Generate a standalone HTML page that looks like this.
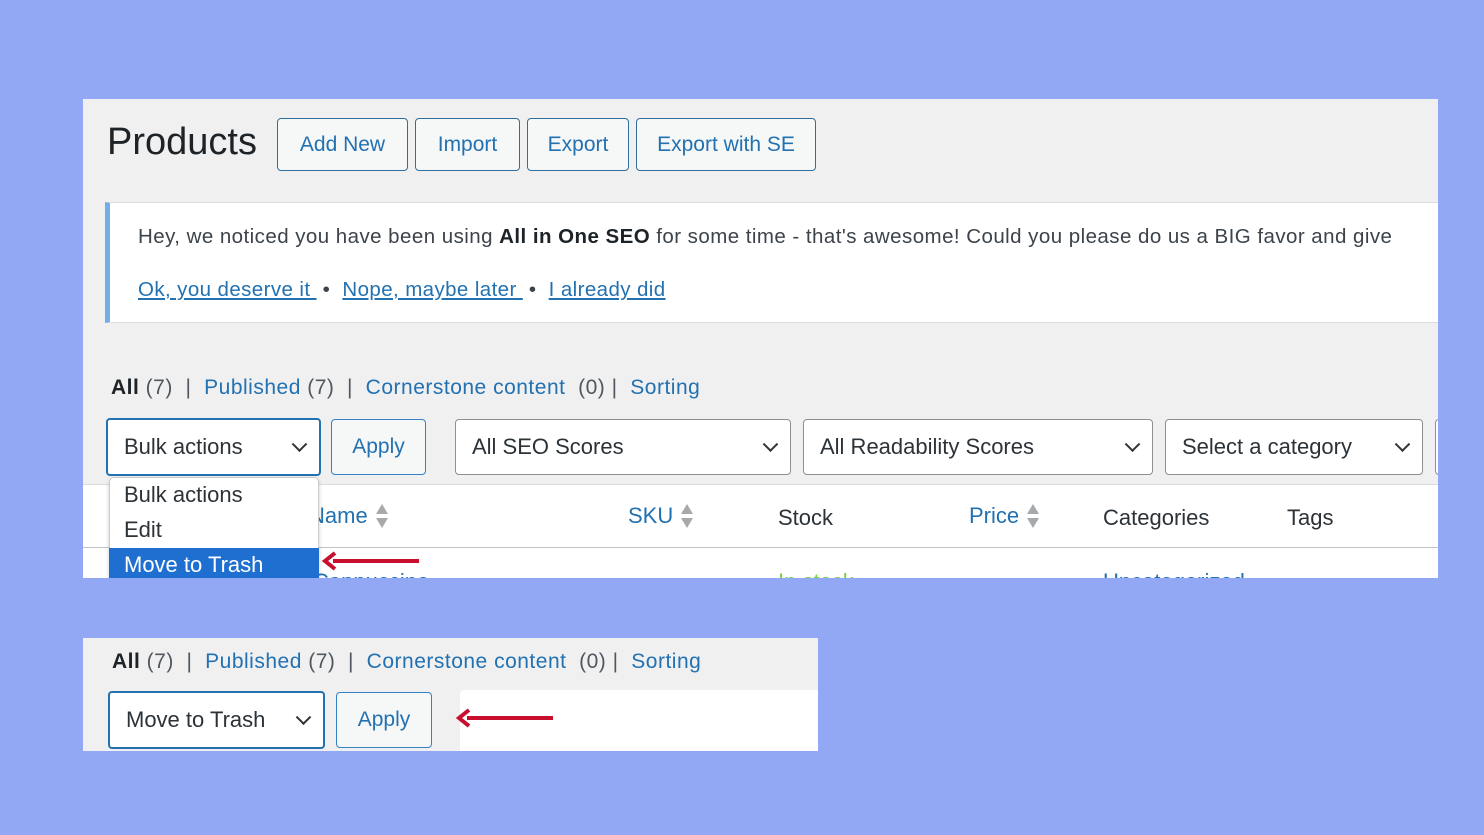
<!DOCTYPE html>
<html><head><meta charset="utf-8"><style>
*{margin:0;padding:0;box-sizing:border-box}
body{width:1484px;height:835px;background:#93a8f5;position:relative;overflow:hidden;font-family:"Liberation Sans",sans-serif;}
.p{position:absolute;background:#f0f0f1;overflow:hidden}
.a{position:absolute;white-space:nowrap}
.btn{position:absolute;border:1.5px solid #2f6f9f;border-radius:4px;color:#2271b1;font-size:21px;display:flex;align-items:center;justify-content:center;background:#f6f7f7}
.sel{position:absolute;border:1px solid #8c8f94;border-radius:4px;background:#fff;color:#2c3338;font-size:22px;display:flex;align-items:center;padding-left:16px}
.chev{position:absolute;right:14px;top:50%;width:11px;height:11px;border-right:2.5px solid #333;border-bottom:2.5px solid #333;transform:translateY(-75%) rotate(45deg)}
.lnk{color:#2271b1}
.sort{display:inline-block;vertical-align:middle;margin-left:8px;width:12px;height:26px;position:relative}
.sort:before{content:"";position:absolute;left:0;top:0;border-left:6px solid transparent;border-right:6px solid transparent;border-bottom:10px solid #a7aaad}
.sort:after{content:"";position:absolute;left:0;top:14px;border-left:6px solid transparent;border-right:6px solid transparent;border-top:10px solid #a7aaad}
</style></head><body>

<div class="p" style="left:83px;top:99px;width:1355px;height:479px">
  <div class="a" style="left:24px;top:22px;font-size:38px;color:#1d2327">Products</div>
  <div class="btn" style="left:194px;top:19px;width:131px;height:53px">Add New</div>
  <div class="btn" style="left:332px;top:19px;width:105px;height:53px">Import</div>
  <div class="btn" style="left:444px;top:19px;width:102px;height:53px">Export</div>
  <div class="btn" style="left:553px;top:19px;width:180px;height:53px">Export with SE</div>

  <div class="a" style="left:22px;top:103px;width:1340px;height:121px;background:#fff;border:1px solid #dcdcde;border-left:5px solid #72aee6"></div>
  <div class="a" style="left:55px;top:126px;font-size:20.5px;letter-spacing:0.45px;color:#3c434a">Hey, we noticed you have been using <b style="color:#1d2327">All in One SEO</b> for some time - that's awesome! Could you please do us a BIG favor and give</div>
  <div class="a" style="left:55px;top:179px;font-size:20.5px;letter-spacing:0.4px;color:#3c434a"><u class="lnk">Ok, you deserve it </u> &nbsp;•&nbsp; <u class="lnk">Nope, maybe later </u> &nbsp;•&nbsp; <u class="lnk">I already did</u></div>

  <div class="a" style="left:28px;top:277px;font-size:21px;letter-spacing:0.5px;color:#50575e"><b style="color:#1d2327">All</b> (7) &nbsp;| &nbsp;<span class="lnk">Published</span> (7) &nbsp;| &nbsp;<span class="lnk">Cornerstone content</span> &nbsp;(0) | &nbsp;<span class="lnk">Sorting</span></div>

  <div class="a" style="left:0;top:385px;width:1355px;height:100px;background:#fff;border-top:1px solid #dcdcde"></div>
  <div class="a" style="left:0;top:448px;width:1355px;height:1px;background:#c3c4c7"></div>

  <div class="sel" style="left:23px;top:319px;width:215px;height:58px;border:2px solid #2271b1">Bulk actions<span class="chev"></span></div>
  <div class="btn" style="left:248px;top:320px;width:95px;height:56px;border-color:#3582c4">Apply</div>
  <div class="sel" style="left:372px;top:320px;width:336px;height:56px">All SEO Scores<span class="chev"></span></div>
  <div class="sel" style="left:720px;top:320px;width:350px;height:56px">All Readability Scores<span class="chev"></span></div>
  <div class="sel" style="left:1082px;top:320px;width:258px;height:56px">Select a category<span class="chev"></span></div>
  <div class="a" style="left:1352px;top:320px;width:5px;height:56px;border:1px solid #8c8f94;border-right:none;border-radius:4px 0 0 4px;background:#fff"></div>

  <div class="a lnk" style="left:226px;top:404px;font-size:22px">Name<span class="sort"></span></div>
  <div class="a lnk" style="left:545px;top:404px;font-size:22px">SKU<span class="sort"></span></div>
  <div class="a" style="left:695px;top:406px;font-size:22px;color:#2c3338">Stock</div>
  <div class="a lnk" style="left:886px;top:404px;font-size:22px">Price<span class="sort"></span></div>
  <div class="a" style="left:1020px;top:406px;font-size:22px;color:#2c3338">Categories</div>
  <div class="a" style="left:1204px;top:406px;font-size:22px;color:#2c3338">Tags</div>
  <div class="a" style="left:230px;top:470px;font-size:22px;color:#2271b1">Cappuccino</div>
  <div class="a" style="left:695px;top:470px;font-size:22px;color:#7ad03a">In stock</div>
  <div class="a" style="left:1020px;top:470px;font-size:22px;color:#2271b1">Uncategorized</div>

  <div class="a" style="left:26px;top:378px;width:210px;height:110px;background:#fff;border:1px solid #ccc;border-radius:5px;box-shadow:0 2px 4px rgba(0,0,0,.2)"></div>
  <div class="a" style="left:41px;top:383px;font-size:22px;color:#2c3338">Bulk actions</div>
  <div class="a" style="left:41px;top:418px;font-size:22px;color:#2c3338">Edit</div>
  <div class="a" style="left:26px;top:449px;width:210px;height:40px;background:#1e6fd0"></div>
  <div class="a" style="left:41px;top:453px;font-size:22px;color:#fff">Move to Trash</div>
  <svg class="a" style="left:238px;top:452px" width="100" height="20"><path d="M12 10H98" stroke="#c8102e" stroke-width="4"/><path d="M14 2L4 10L14 18" fill="none" stroke="#c8102e" stroke-width="4"/></svg>
</div>

<div class="p" style="left:83px;top:638px;width:735px;height:113px">
  <div class="a" style="left:29px;top:12px;font-size:21px;letter-spacing:0.5px;color:#50575e"><b style="color:#1d2327">All</b> (7) &nbsp;| &nbsp;<span class="lnk">Published</span> (7) &nbsp;| &nbsp;<span class="lnk">Cornerstone content</span> &nbsp;(0) | &nbsp;<span class="lnk">Sorting</span></div>
  <div class="a" style="left:377px;top:52px;width:360px;height:65px;background:#fff;border-radius:4px"></div>
  <div class="sel" style="left:25px;top:53px;width:217px;height:58px;border:2px solid #2271b1">Move to Trash<span class="chev"></span></div>
  <div class="btn" style="left:253px;top:54px;width:96px;height:56px;border-color:#3582c4">Apply</div>
  <svg class="a" style="left:372px;top:70px" width="100" height="20"><path d="M12 10H98" stroke="#c8102e" stroke-width="4"/><path d="M14 2L4 10L14 18" fill="none" stroke="#c8102e" stroke-width="4"/></svg>
</div>
</body></html>
